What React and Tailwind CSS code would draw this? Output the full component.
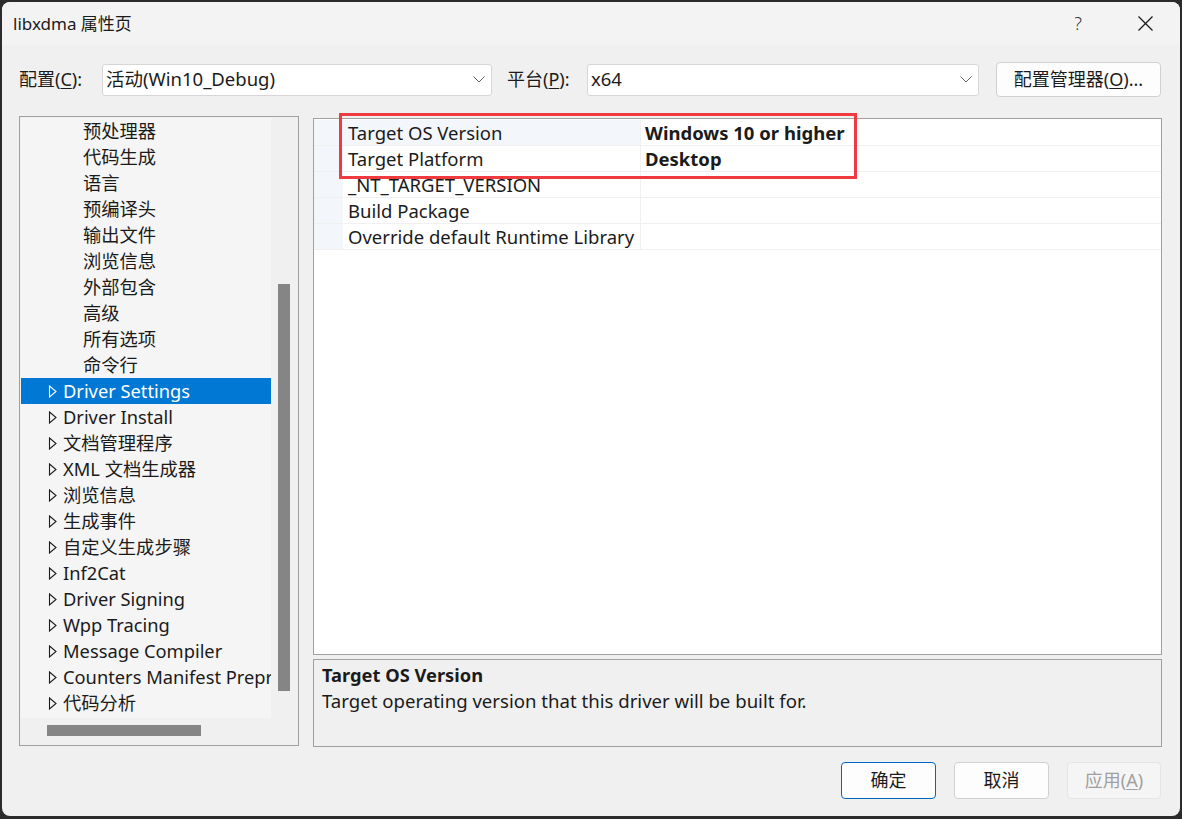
import React from 'react';

const FONT = { fontFamily: '"Noto Sans", "Noto Sans CJK SC", sans-serif' };

const treeItems = [
    { label: '预处理器', child: true },
    { label: '代码生成', child: true },
    { label: '语言', child: true },
    { label: '预编译头', child: true },
    { label: '输出文件', child: true },
    { label: '浏览信息', child: true },
    { label: '外部包含', child: true },
    { label: '高级', child: true },
    { label: '所有选项', child: true },
    { label: '命令行', child: true },
    { label: 'Driver Settings', selected: true },
    { label: 'Driver Install' },
    { label: '文档管理程序' },
    { label: 'XML 文档生成器' },
    { label: '浏览信息' },
    { label: '生成事件' },
    { label: '自定义生成步骤' },
    { label: 'Inf2Cat' },
    { label: 'Driver Signing' },
    { label: 'Wpp Tracing' },
    { label: 'Message Compiler' },
    { label: 'Counters Manifest Preprocessor' },
    { label: '代码分析' },
];

const props = [
    { name: 'Target OS Version', value: 'Windows 10 or higher', active: true },
    { name: 'Target Platform', value: 'Desktop' },
    { name: '_NT_TARGET_VERSION', value: '' },
    { name: 'Build Package', value: '' },
    { name: 'Override default Runtime Library', value: '' },
];

// small outline triangle used by the tree
function Expander({ white }) {
    return (
        <svg width="9" height="13" viewBox="0 0 9 13" className="shrink-0">
            <polygon points="1.5,1 8,6.5 1.5,12" fill="none" stroke={white ? '#ffffff' : '#1b1b1b'} strokeWidth="1.1" strokeLinejoin="miter" />
        </svg>
    );
}

function Chevron() {
    return (
        <svg width="12" height="7" viewBox="0 0 12 7">
            <polyline points="0.5,0.5 6,6 11.5,0.5" fill="none" stroke="#606060" strokeWidth="1" />
        </svg>
    );
}

function Combo({ text, width }) {
    return (
        <div className={`${width} h-[32px] bg-white border border-[#d6d6d6] rounded-[3px] flex items-center justify-between pl-[3px] pr-[6px]`}>
            <span className="text-[18.5px] text-[#1b1b1b] leading-none">{text}</span>
            <Chevron />
        </div>
    );
}

export default function App() {
    return (
        <div className="w-[1182px] h-[819px] bg-[#2b2b2b] pt-[2px] pl-[2px] pr-[2px] pb-[3px]" style={FONT}>
            <div className="h-full w-full rounded-[8px] bg-[#f0f0f0] overflow-hidden flex flex-col text-[#1b1b1b]">
                {/* Title bar */}
                <div className="h-[43px] bg-[#f3f3f3] flex items-center justify-between pl-[11px] pr-[27px]">
                    <span className="text-[17px]">libxdma 属性页</span>
                    <div className="flex items-center gap-[56px]">
                        <span className="text-[18px] font-light text-[#333]">?</span>
                        <svg width="15" height="15" viewBox="0 0 15 15">
                            <line x1="0.5" y1="0.5" x2="14.5" y2="14.5" stroke="#1b1b1b" strokeWidth="1.2" />
                            <line x1="14.5" y1="0.5" x2="0.5" y2="14.5" stroke="#1b1b1b" strokeWidth="1.2" />
                        </svg>
                    </div>
                </div>

                {/* Configuration row */}
                <div className="mt-[17px] h-[35px] flex items-center pl-[17px]">
                    <span className="w-[83px] text-[18px]">配置(<span className="underline underline-offset-2">C</span>):</span>
                    <Combo text="活动(Win10_Debug)" width="w-[390px]" />
                    <span className="ml-[15px] w-[80px] text-[18px]">平台(<span className="underline underline-offset-2">P</span>):</span>
                    <Combo text="x64" width="w-[392px]" />
                    <button className="ml-[17px] w-[165px] h-[35px] bg-[#fdfdfd] border border-[#d0d0d0] rounded-[4px] text-[18px]">
                        配置管理器(<span className="underline underline-offset-2">O</span>)...
                    </button>
                </div>

                {/* Main area */}
                <div className="mt-[19px] h-[631px] flex pl-[17px]">
                    {/* Tree panel */}
                    <div className="w-[280px] h-[630px] border border-[#a0a0a0] flex flex-col">
                        <div className="flex h-[601px] pt-[1px] pl-[1px]">
                            <div className="w-[250px] h-[600px] bg-[#f5f5f5] overflow-hidden">
                                {treeItems.map((item, i) => (
                                    <div
                                        key={i}
                                        className={`h-[26px] flex items-center whitespace-nowrap text-[18.3px] ${item.selected ? 'bg-[#0078d4] text-white' : ''} ${item.child ? 'pl-[62px]' : 'pl-[27px]'}`}
                                    >
                                        {!item.child && <Expander white={item.selected} />}
                                        <span className={item.child ? '' : 'ml-[6px]'}>{item.label}</span>
                                    </div>
                                ))}
                            </div>
                            {/* vertical scrollbar */}
                            <div className="flex-1 pl-[7px] pt-[166px]">
                                <div className="w-[12px] h-[407px] bg-[#858585]" />
                            </div>
                        </div>
                        {/* horizontal scrollbar */}
                        <div className="flex-1 pl-[27px] pt-[7px]">
                            <div className="w-[154px] h-[11px] bg-[#858585]" />
                        </div>
                    </div>

                    {/* Right column */}
                    <div className="ml-[14px] w-[849px] flex flex-col">
                        <div className="relative mt-[2px] h-[538px] bg-white border border-[#a0a0a0] pt-[1px]">
                            {props.map((p, i) => (
                                <div key={i} className="h-[26px] flex border-b border-[#f0f0f0] text-[18.5px]">
                                    <div className="w-[29px] bg-[#f3f6fb]" />
                                    <div className={`w-[298px] pl-[5px] pt-[1px] flex items-center border-r border-[#f0f0f0] whitespace-nowrap ${p.active ? 'bg-[#f3f6fb]' : ''}`}>
                                        {p.name}
                                    </div>
                                    <div className="flex-1 pl-[4px] pt-[1px] flex items-center font-bold">{p.value}</div>
                                </div>
                            ))}
                            {/* highlight drawn over the grid */}
                            <div className="absolute left-[25px] top-[-6px] w-[518px] h-[66px] border-[3px] border-[#ef3a3f] pointer-events-none" />
                        </div>
                        <div className="mt-[4px] h-[88px] border border-[#a0a0a0] bg-[#f0f0f0] pl-[8px] pt-[2px]">
                            <div className="h-[26px] flex items-center text-[18.3px] font-bold whitespace-nowrap">Target OS Version</div>
                            <div className="h-[26px] flex items-center text-[18.6px] whitespace-nowrap">Target operating version that this driver will be built for.</div>
                        </div>
                    </div>
                </div>

                {/* Dialog buttons */}
                <div className="mt-[15px] flex justify-end gap-[18px] pr-[19px]">
                    <button className="w-[95px] h-[37px] bg-[#fdfdfd] border border-[#0067c0] rounded-[4px] text-[18px]">确定</button>
                    <button className="w-[95px] h-[37px] bg-[#fdfdfd] border border-[#d0d0d0] rounded-[4px] text-[18px]">取消</button>
                    <button className="w-[94px] h-[37px] bg-[#f5f5f5] border border-[#e5e5e5] rounded-[4px] text-[18px] text-[#a0a0a0]">
                        应用(<span className="underline underline-offset-2">A</span>)
                    </button>
                </div>
            </div>
        </div>
    );
}
